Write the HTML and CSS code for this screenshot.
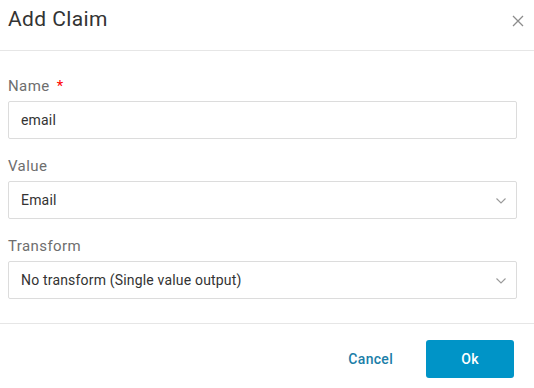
FILE: index.html
```html
<!DOCTYPE html>
<html>

<head>
  <title>Add Claim</title>

  <link rel="stylesheet" href="styles.css">
</head>

<body>

  <div class="modal">
    <div class="modal-header">
      <h2 class="modal-title">Add Claim</h2>
      <button class="close-button" type="button">
        <svg width="12" height="12" viewBox="0 0 12 12">
          <path d="M1 1 L11 11 M11 1 L1 11" stroke="#8c8c8c" stroke-width="1.3" fill="none"/>
        </svg>
      </button>
    </div>

    <div class="modal-body">
      <div class="field">
        <label class="field-label">Name <span class="required">*</span></label>
        <input class="field-input" type="text" value="email">
      </div>

      <div class="field">
        <label class="field-label">Value</label>
        <div class="field-select">
          <span>Email</span>
          <svg class="chevron" width="10" height="6" viewBox="0 0 10 6">
            <path d="M0.5 0.5 L5 5 L9.5 0.5" stroke="#9a9a9a" stroke-width="1.1" fill="none"/>
          </svg>
        </div>
      </div>

      <div class="field">
        <label class="field-label">Transform</label>
        <div class="field-select">
          <span>No transform (Single value output)</span>
          <svg class="chevron" width="10" height="6" viewBox="0 0 10 6">
            <path d="M0.5 0.5 L5 5 L9.5 0.5" stroke="#9a9a9a" stroke-width="1.1" fill="none"/>
          </svg>
        </div>
      </div>
    </div>

    <div class="modal-footer">
      <button class="button-cancel" type="button">Cancel</button>
      <button class="button-ok" type="button">Ok</button>
    </div>
  </div>

</body>

</html>
```

FILE: styles.css
```css
body {
  margin: 0;
  padding: 0;
  background-color: white;
  font-family: Roboto, "Liberation Sans", sans-serif;
  color: #333333;
}

.modal {
  width: 534px;
}

.modal-header {
  height: 51px;
  box-sizing: border-box;
  padding: 7px 10px 0 8px;
  display: flex;
  justify-content: space-between;
  align-items: flex-start;
  border-bottom: 1px solid #e6e6e6;
}

.modal-title {
  margin: 0;
  font-size: 21px;
  line-height: 24px;
  font-weight: 400;
  letter-spacing: 0.4px;
  color: #333333;
}

.close-button {
  border: none;
  background: none;
  padding: 0;
  margin-top: 8px;
  width: 12px;
  height: 12px;
  display: flex;
}

.modal-body {
  padding: 25px 17px 24px 8px;
  display: flex;
  flex-direction: column;
  gap: 17px;
}

.field {
  display: flex;
  flex-direction: column;
  gap: 5px;
}

.field-label {
  font-size: 15px;
  line-height: 20px;
  letter-spacing: 0.4px;
  color: #6e6e6e;
}

.required {
  color: #ff0000;
  margin-left: 3px;
}

.field-input,
.field-select {
  height: 38px;
  box-sizing: border-box;
  border: 1px solid #dcdcdc;
  border-radius: 2px;
  padding: 0 12px;
  font-family: Roboto, "Liberation Sans", sans-serif;
  font-size: 14px;
  letter-spacing: 0.18px;
  color: #333333;
  background-color: white;
}

.field-input {
  width: 100%;
  outline: none;
}

.field-select {
  display: flex;
  align-items: center;
  justify-content: space-between;
  padding-right: 10px;
}

.chevron {
  margin-top: 1px;
}

.modal-footer {
  border-top: 1px solid #e6e6e6;
  padding: 16px 20px 10px 0;
  display: flex;
  justify-content: flex-end;
  align-items: center;
  gap: 16px;
}

.button-cancel,
.button-ok {
  height: 38px;
  border: none;
  border-radius: 3px;
  font-family: Roboto, "Liberation Sans", sans-serif;
  font-size: 14px;
  font-weight: 500;
  letter-spacing: 0.3px;
}

.button-cancel {
  background: none;
  color: #1b7ea8;
  padding: 0 17px;
}

.button-ok {
  width: 88px;
  background-color: #0094c7;
  color: white;
}
```
